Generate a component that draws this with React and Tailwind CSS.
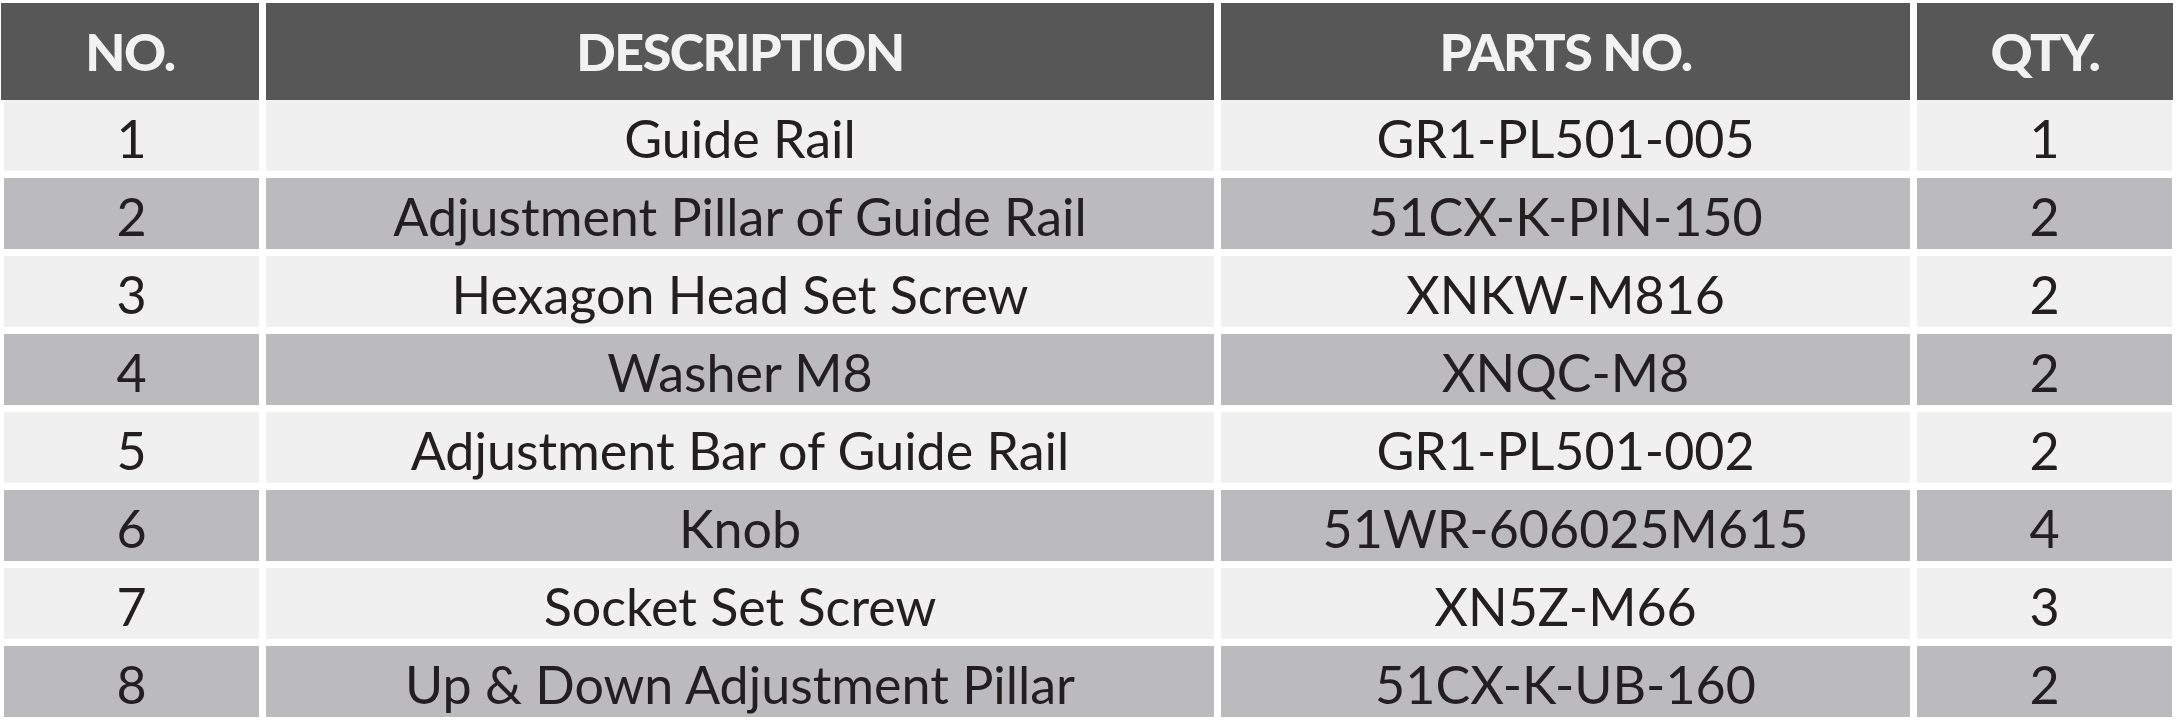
const PARTS = [
  { no: 1, desc: 'Guide Rail', part: 'GR1-PL501-005', qty: 1 },
  { no: 2, desc: 'Adjustment Pillar of Guide Rail', part: '51CX-K-PIN-150', qty: 2 },
  { no: 3, desc: 'Hexagon Head Set Screw', part: 'XNKW-M816', qty: 2 },
  { no: 4, desc: 'Washer M8', part: 'XNQC-M8', qty: 2 },
  { no: 5, desc: 'Adjustment Bar of Guide Rail', part: 'GR1-PL501-002', qty: 2 },
  { no: 6, desc: 'Knob', part: '51WR-606025M615', qty: 4 },
  { no: 7, desc: 'Socket Set Screw', part: 'XN5Z-M66', qty: 3 },
  { no: 8, desc: 'Up & Down Adjustment Pillar', part: '51CX-K-UB-160', qty: 2 },
]

const HEAD = ['NO.', 'DESCRIPTION', 'PARTS NO.', 'QTY.']

export default function App() {
  return (
    <div className="w-[2176px] h-[722px] bg-white pt-[3px] pl-[1px] font-['Lato','Noto_Sans',sans-serif]">
      <div className="grid grid-cols-[258px_948px_689px_256px] gap-x-[7px]">
        {HEAD.map(h => (
          <div key={h} className="h-[97px] bg-[#575757] flex items-center justify-center text-[#f2f2f2] text-[52px] font-black tracking-[-1.5px] leading-none pb-[2px]">
            {h}
          </div>
        ))}
      </div>
      <div className="flex flex-col gap-y-[7px]">
        {PARTS.map((p, i) => {
          const bg = i % 2 === 0 ? 'bg-[#f0f0f0]' : 'bg-[#bbbabc]'
          const cell = `${bg} flex items-center justify-center pt-[5px]`
          return (
            <div key={p.no} className="grid grid-cols-[258px_948px_689px_256px] gap-x-[7px] h-[71px] text-[#231f20] text-[52px] leading-none">
              <div className={`${cell} ml-[3px]`}>{p.no}</div>
              <div className={cell}>{p.desc}</div>
              <div className={cell}>{p.part}</div>
              <div className={`${cell} mr-[1px]`}>{p.qty}</div>
            </div>
          )
        })}
      </div>
    </div>
  )
}
